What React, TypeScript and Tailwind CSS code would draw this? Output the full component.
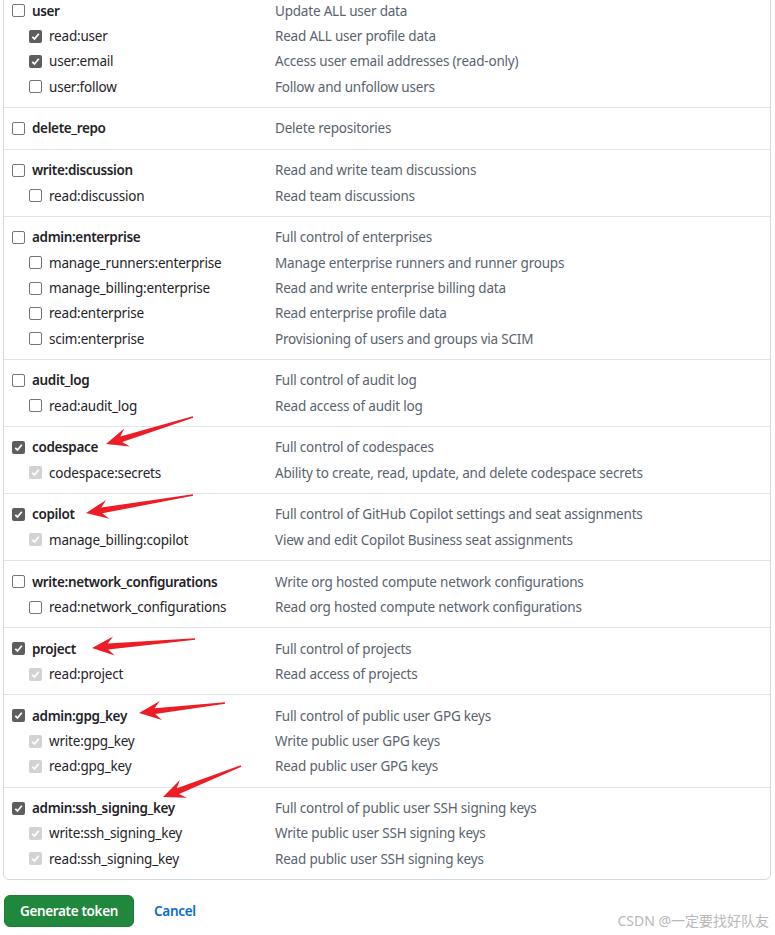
import React from 'react'

type State = 'off' | 'on' | 'locked'
type Scope = { name: string; desc: string; state: State }
type Group = Scope & { children: Scope[] }

const s = (name: string, desc: string, state: State = 'off'): Scope => ({ name, desc, state })

const groups: Group[] = [
  {
    ...s('user', 'Update ALL user data'),
    children: [
      s('read:user', 'Read ALL user profile data', 'on'),
      s('user:email', 'Access user email addresses (read-only)', 'on'),
      s('user:follow', 'Follow and unfollow users'),
    ],
  },
  { ...s('delete_repo', 'Delete repositories'), children: [] },
  {
    ...s('write:discussion', 'Read and write team discussions'),
    children: [s('read:discussion', 'Read team discussions')],
  },
  {
    ...s('admin:enterprise', 'Full control of enterprises'),
    children: [
      s('manage_runners:enterprise', 'Manage enterprise runners and runner groups'),
      s('manage_billing:enterprise', 'Read and write enterprise billing data'),
      s('read:enterprise', 'Read enterprise profile data'),
      s('scim:enterprise', 'Provisioning of users and groups via SCIM'),
    ],
  },
  {
    ...s('audit_log', 'Full control of audit log'),
    children: [s('read:audit_log', 'Read access of audit log')],
  },
  {
    ...s('codespace', 'Full control of codespaces', 'on'),
    children: [s('codespace:secrets', 'Ability to create, read, update, and delete codespace secrets', 'locked')],
  },
  {
    ...s('copilot', 'Full control of GitHub Copilot settings and seat assignments', 'on'),
    children: [s('manage_billing:copilot', 'View and edit Copilot Business seat assignments', 'locked')],
  },
  {
    ...s('write:network_configurations', 'Write org hosted compute network configurations'),
    children: [s('read:network_configurations', 'Read org hosted compute network configurations')],
  },
  {
    ...s('project', 'Full control of projects', 'on'),
    children: [s('read:project', 'Read access of projects', 'locked')],
  },
  {
    ...s('admin:gpg_key', 'Full control of public user GPG keys', 'on'),
    children: [
      s('write:gpg_key', 'Write public user GPG keys', 'locked'),
      s('read:gpg_key', 'Read public user GPG keys', 'locked'),
    ],
  },
  {
    ...s('admin:ssh_signing_key', 'Full control of public user SSH signing keys', 'on'),
    children: [
      s('write:ssh_signing_key', 'Write public user SSH signing keys', 'locked'),
      s('read:ssh_signing_key', 'Read public user SSH signing keys', 'locked'),
    ],
  },
]

// red annotation arrows: [tipX, tipY, tailX, tailY]
const arrows = [
  [106, 444, 193, 417],
  [86, 513, 193, 495],
  [92, 648, 195, 639],
  [139, 713, 225, 703],
  [163, 797, 241, 766],
]

const arrowPoints = ([x1, y1, x2, y2]: number[]) => {
  const len = Math.hypot(x2 - x1, y2 - y1)
  const ux = (x2 - x1) / len
  const uy = (y2 - y1) / len
  const nx = -uy
  const ny = ux
  const p = (a: number, b: number) => `${(x1 + ux * a + nx * b).toFixed(1)},${(y1 + uy * a + ny * b).toFixed(1)}`
  return [p(0, 0), p(22, 9.5), p(16, 3), p(len, 0.8), p(len, -0.8), p(16, -3), p(22, -9.5)].join(' ')
}

const Box = ({ state }: { state: State }) => {
  if (state === 'off')
    return <span className="block w-[13px] h-[13px] rounded-[2px] border border-[#767676] bg-white shrink-0" />
  return (
    <span
      className={`flex items-center justify-center w-[13px] h-[13px] rounded-[2px] shrink-0 ${
        state === 'on' ? 'bg-[#5e5e5e]' : 'bg-[#d3d3d3]'
      }`}
    >
      <svg width="9" height="9" viewBox="0 0 9 9">
        <polyline points="1.3,4.8 3.5,7 7.8,1.8" fill="none" stroke="white" strokeWidth="1.8" />
      </svg>
    </span>
  )
}

const Row = ({ scope, child }: { scope: Scope; child?: boolean }) => (
  <div className="flex items-center h-[25.35px]">
    <div className={`flex items-center gap-[7px] w-[263px] shrink-0 ${child ? 'pl-[17px]' : ''}`}>
      <Box state={scope.state} />
      <span
        className={
          child ? 'text-[#1f2328] tracking-[-0.2px]' : 'font-semibold text-[#1f2328] tracking-[-0.35px]'
        }
      >
        {scope.name}
      </span>
    </div>
    <span className="text-[#59636e] whitespace-nowrap tracking-[-0.2px]">{scope.desc}</span>
  </div>
)

export default function App() {
  return (
    <div
      className="relative w-full h-[935px] overflow-hidden bg-white text-[13.5px]"
      style={{ fontFamily: '"Noto Sans", "Open Sans", sans-serif' }}
    >
      <div className="mt-[-10.5px] ml-[3px] w-[768px] border border-[#d1d9e0] rounded-b-[6px] divide-y divide-[#e1e5ea]">
        {groups.map((g) => (
          <div key={g.name} className="pl-[8px] py-[7.7px]">
            <Row scope={g} />
            {g.children.map((c) => (
              <Row key={c.name} scope={c} child />
            ))}
          </div>
        ))}
      </div>

      <div className="flex items-start mt-[15px] ml-[4px]">
        <button className="h-[32px] w-[130px] rounded-[6px] bg-[#1f883d] text-white font-semibold tracking-[-0.35px] border border-[#1a7f37]">
          Generate token
        </button>
        <a className="ml-[20px] mt-[6px] text-[#0969da] font-semibold tracking-[-0.3px]">Cancel</a>
        <span
          className="ml-auto mr-[6px] mt-[15px] text-[14px] text-[#b8b8b8]"
          style={{ fontFamily: '"Noto Sans", "Noto Sans CJK SC", sans-serif' }}
        >
          CSDN @一定要找好队友
        </span>
      </div>

      <svg className="absolute inset-0 pointer-events-none" width="775" height="935">
        {arrows.map((a, i) => (
          <polygon key={i} points={arrowPoints(a)} fill="#ec1d25" />
        ))}
      </svg>
    </div>
  )
}
